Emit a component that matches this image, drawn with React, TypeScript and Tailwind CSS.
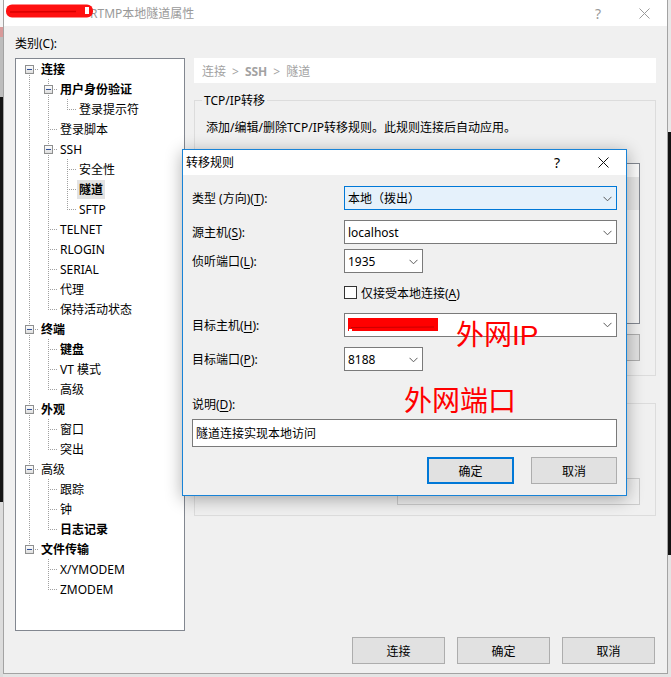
import React from "react";

type TNode = { label: string; bold?: boolean; selected?: boolean; children?: TNode[] };

const TREE: TNode[] = [
  {
    label: "连接",
    bold: true,
    children: [
      { label: "用户身份验证", bold: true, children: [{ label: "登录提示符" }] },
      { label: "登录脚本" },
      {
        label: "SSH",
        children: [{ label: "安全性" }, { label: "隧道", bold: true, selected: true }, { label: "SFTP" }],
      },
      { label: "TELNET" },
      { label: "RLOGIN" },
      { label: "SERIAL" },
      { label: "代理" },
      { label: "保持活动状态" },
    ],
  },
  { label: "终端", bold: true, children: [{ label: "键盘", bold: true }, { label: "VT 模式" }, { label: "高级" }] },
  { label: "外观", bold: true, children: [{ label: "窗口" }, { label: "突出" }] },
  { label: "高级", children: [{ label: "跟踪" }, { label: "钟" }, { label: "日志记录", bold: true }] },
  { label: "文件传输", bold: true, children: [{ label: "X/YMODEM" }, { label: "ZMODEM" }] },
];

type Row = { node: TNode; level: number; isLast: boolean; isFirstRoot: boolean; cont: boolean[] };

function flatten(nodes: TNode[], level: number, cont: boolean[], out: Row[]): Row[] {
  nodes.forEach((n, i) => {
    const isLast = i === nodes.length - 1;
    out.push({ node: n, level, isLast, isFirstRoot: level === 0 && i === 0, cont });
    if (n.children) flatten(n.children, level + 1, [...cont, !isLast], out);
  });
  return out;
}

const DOT = "#a0a0a0";

function TreeRow({ row }: { row: Row }) {
  const { node, level, isLast, isFirstRoot, cont } = row;
  const w = 23 + 19 * level;
  const gx = (l: number) => 13.5 + 19 * l;
  const x = gx(level);
  return (
    <div className="flex h-[20px] items-center">
      <svg width={w} height={20} className="shrink-0" shapeRendering="crispEdges">
        {cont.map((c, a) =>
          c ? <line key={a} x1={gx(a)} y1={0} x2={gx(a)} y2={20} stroke={DOT} strokeDasharray="1 1" /> : null
        )}
        <line x1={x} y1={isFirstRoot ? 10 : 0} x2={x} y2={isLast ? 10 : 20} stroke={DOT} strokeDasharray="1 1" />
        <line x1={x - 0.5} y1={10.5} x2={x + 9.5} y2={10.5} stroke={DOT} strokeDasharray="1 1" />
        {node.children && (
          <g>
            <defs>
              <linearGradient id="expg" x1="0" y1="0" x2="0" y2="1">
                <stop offset="0" stopColor="#ffffff" />
                <stop offset="1" stopColor="#dcdcdc" />
              </linearGradient>
            </defs>
            <rect x={x - 4} y={6.5} width={8} height={8} fill="url(#expg)" stroke="#8e8f8f" />
            <line x1={x - 2.5} y1={10.5} x2={x + 2.5} y2={10.5} stroke="#2f4f9a" />
          </g>
        )}
      </svg>
      <span
        className={
          "flex h-[19px] items-center whitespace-nowrap px-[2px] pt-[2px] leading-[14px] " +
          (node.bold ? "font-bold " : "") +
          (node.selected ? "bg-[#e3e3e3]" : "")
        }
      >
        {node.label}
      </span>
    </div>
  );
}

function Chevron() {
  return (
    <svg width="9" height="6" viewBox="0 0 9 6" className="shrink-0">
      <polyline points="0.5,0.8 4.5,4.8 8.5,0.8" fill="none" stroke="#5a5a5a" strokeWidth="1" />
    </svg>
  );
}

function CloseX({ color }: { color: string }) {
  return (
    <svg width="11" height="11" viewBox="0 0 11 11">
      <line x1="0.5" y1="0.5" x2="10.5" y2="10.5" stroke={color} strokeWidth="1" />
      <line x1="10.5" y1="0.5" x2="0.5" y2="10.5" stroke={color} strokeWidth="1" />
    </svg>
  );
}

function U({ c }: { c: string }) {
  return <span className="underline decoration-1 underline-offset-[2px]">{c}</span>;
}

const BTN = "flex h-[27px] items-center justify-center border border-[#adadad] bg-[#e1e1e1] pt-[2px]";

export default function App() {
  const rows = flatten(TREE, 0, [], []);
  return (
    <div className="relative flex h-[677px] w-[671px] overflow-hidden bg-[#e4e4e4] text-[12px] leading-[14px] text-black font-['Noto_Sans','Noto_Sans_CJK_SC',sans-serif]">
      {/* desktop strip left */}
      <div className="flex w-[3px] shrink-0 flex-col">
        <div className="h-[27px] bg-[#f4f4f4]" />
        <div className="h-[10px] bg-[#d89a9a]" />
        <div className="h-[60px] bg-[#bdbdbd]" />
        <div className="h-[405px] bg-[#151515]" />
        <div className="flex-1 bg-[#dcdcdc]" />
      </div>

      {/* main window */}
      <div className="relative flex h-[674px] w-[665px] shrink-0 flex-col border border-t-0 border-[#a3a3a3] bg-[#f0f0f0]">
        {/* title bar */}
        <div className="relative flex h-[26px] shrink-0 items-center bg-white pl-[86px] pt-[1px]">
          <span className="text-[#999999]">RTMP本地隧道属性</span>
          <div className="ml-auto flex h-full">
            <div className="flex w-[46px] items-center justify-center text-[14px] text-[#9a9a9a]">?</div>
            <div className="flex w-[46px] items-center justify-center">
              <CloseX color="#9a9a9a" />
            </div>
          </div>
          <svg className="absolute left-[2px] top-[4px]" width="88" height="14" viewBox="0 0 88 14">
            <rect x="0" y="0.5" width="87" height="13" rx="6" fill="#ff1010" />
            <path d="M4 8 L70 7.5" stroke="#d80000" strokeWidth="1.5" />
            <rect x="79" y="3" width="4" height="7" fill="#ffffff" />
          </svg>
        </div>

        {/* body */}
        <div className="flex flex-1 flex-col pl-[11px] pr-[11px] pt-[11px]">
          <div className="h-[14px]">类别(C):</div>
          <div className="mt-[7px] flex h-[573px] gap-[9px]">
            {/* tree */}
            <div className="w-[170px] shrink-0 border border-[#828790] bg-white">
              {rows.map((r, i) => (
                <TreeRow key={i} row={r} />
              ))}
            </div>
            {/* right panel */}
            <div className="flex flex-1 flex-col">
              <div className="flex h-[25px] items-center gap-[6px] bg-white pl-[8px] pt-[2px] text-[#a2a2a2]">
                <span>连接</span>
                <span>&gt;</span>
                <span className="font-bold">SSH</span>
                <span>&gt;</span>
                <span>隧道</span>
              </div>
              {/* group 1 */}
              <div className="relative mt-[17px] flex h-[276px] flex-col border border-[#dcdcdc] pl-[11px] pr-[15px] pt-[20px]">
                <span className="absolute left-[7px] top-[-7px] bg-[#f0f0f0] px-[2px]">TCP/IP转移</span>
                <div className="h-[14px]">添加/编辑/删除TCP/IP转移规则。此规则连接后自动应用。</div>
                <div className="mt-[28px] flex h-[161px] flex-col border border-[#828790] bg-[#f4f4f4]">
                  <div className="h-[13px] bg-[#fbfbfb]" />
                  <div className="h-[33px] bg-[#e6e6e6]" />
                </div>
                <div className="mt-[10px] flex justify-end gap-[10px]">
                  <div className={BTN + " w-[86px]"} />
                  <div className={BTN + " w-[86px]"} />
                  <div className={BTN + " w-[86px]"} />
                </div>
              </div>
              {/* group 2 */}
              <div className="relative mt-[27px] flex h-[113px] flex-col border border-[#dcdcdc] pl-[11px] pr-[15px] pt-[20px]">
                <div className="mt-auto mb-[10px] flex items-end justify-end">
                  <div className="h-[27px] w-[243px] border border-[#cccccc] bg-[#f0f0f0]" />
                </div>
              </div>
            </div>
          </div>
          {/* bottom buttons */}
          <div className="mt-[6px] flex justify-end gap-[12px] pr-[1px]">
            <div className={BTN + " w-[93px]"}>连接</div>
            <div className={BTN + " w-[93px]"}>确定</div>
            <div className={BTN + " w-[93px]"}>取消</div>
          </div>
        </div>
      </div>

      {/* desktop strip right */}
      <div className="flex w-[3px] shrink-0 flex-col">
        <div className="h-[132px] bg-[#e8e8e8]" />
        <div className="h-[423px] bg-[#121212]" />
        <div className="flex-1 bg-[#e4e4e4]" />
      </div>

      {/* dialog 转移规则 */}
      <div className="absolute left-[182px] top-[149px] flex h-[347px] w-[445px] flex-col border border-[#1883d7] bg-[#f0f0f0] shadow-[0_3px_16px_rgba(0,0,0,0.32)]">
        <div className="flex h-[25px] shrink-0 items-center bg-white pl-[3px]">
          <span className="pt-[1px]">转移规则</span>
          <div className="ml-auto flex h-full">
            <div className="flex w-[46px] items-center justify-center text-[14px]">?</div>
            <div className="flex w-[46px] items-center justify-center">
              <CloseX color="#111111" />
            </div>
          </div>
        </div>
        <div className="flex flex-col pl-[9px] pr-[9px]">
          <div className="mt-[11px] flex items-center">
            <div className="w-[152px] pt-[2px]">
              类型 (方向)(<U c="T" />):
            </div>
            <div className="flex h-[24px] flex-1 items-center justify-between border border-[#0078d7] bg-[#e5f1fb] pl-[3px] pr-[4px] pt-[2px]">
              <span>本地（拨出）</span>
              <Chevron />
            </div>
          </div>
          <div className="mt-[10px] flex items-center">
            <div className="w-[152px] pt-[2px]">
              源主机(<U c="S" />):
            </div>
            <div className="flex h-[24px] flex-1 items-center justify-between border border-[#7a7a7a] bg-white pl-[3px] pr-[4px] pt-[2px]">
              <span>localhost</span>
              <Chevron />
            </div>
          </div>
          <div className="mt-[5px] flex items-center">
            <div className="w-[152px] pt-[2px]">
              侦听端口(<U c="L" />):
            </div>
            <div className="flex h-[24px] w-[79px] items-center justify-between border border-[#7a7a7a] bg-white pl-[3px] pr-[4px] pt-[2px]">
              <span>1935</span>
              <Chevron />
            </div>
          </div>
          <div className="mt-[13px] flex h-[13px] items-center pl-[152px]">
            <div className="h-[13px] w-[13px] border border-[#333333] bg-white" />
            <span className="ml-[4px] pt-[2px]">
              仅接受本地连接(<U c="A" />)
            </span>
          </div>
          <div className="mt-[14px] flex items-center">
            <div className="w-[152px] pt-[2px]">
              目标主机(<U c="H" />):
            </div>
            <div className="relative flex h-[24px] flex-1 items-center justify-between border border-[#7a7a7a] bg-white pl-[3px] pr-[4px]">
              <svg width="90" height="14" viewBox="0 0 90 14">
                <rect x="0" y="0" width="90" height="13" fill="#ff0000" />
                <path d="M3 9.5 L86 9" stroke="#c80000" strokeWidth="1.2" />
                <rect x="1" y="11" width="3" height="2" fill="#ffffff" />
              </svg>
              <Chevron />
            </div>
          </div>
          <div className="mt-[10px] flex items-center">
            <div className="w-[152px] pt-[2px]">
              目标端口(<U c="P" />):
            </div>
            <div className="flex h-[24px] w-[79px] items-center justify-between border border-[#7a7a7a] bg-white pl-[3px] pr-[4px] pt-[2px]">
              <span>8188</span>
              <Chevron />
            </div>
          </div>
          <div className="mt-[27px] h-[14px]">
            说明(<U c="D" />):
          </div>
          <div className="mt-[7px] flex h-[28px] items-center border border-[#7a7a7a] bg-white pl-[3px] pt-[2px]">
            隧道连接实现本地访问
          </div>
          <div className="mt-[10px] flex justify-end gap-[17px]">
            <div className="flex h-[27px] w-[87px] items-center justify-center border-2 border-[#0078d7] bg-[#e1e1e1] pt-[2px]">确定</div>
            <div className={BTN + " w-[86px]"}>取消</div>
          </div>
        </div>
      </div>

      {/* red annotations */}
      <div className="absolute left-[456px] top-[319px] text-[28px] leading-[34px] font-normal text-[#ff0000] font-['Liberation_Sans','Noto_Sans_CJK_SC',sans-serif]">外网IP</div>
      <div className="absolute left-[404px] top-[385px] text-[28px] leading-[34px] font-normal text-[#ff0000] font-['Liberation_Sans','Noto_Sans_CJK_SC',sans-serif]">外网端口</div>
    </div>
  );
}
